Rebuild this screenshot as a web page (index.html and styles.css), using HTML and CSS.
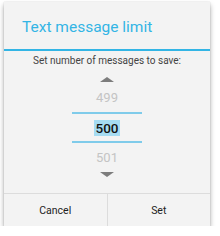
FILE: index.html
```html
<!DOCTYPE html>
<html lang="en">
<head>
  <meta charset="UTF-8" />
  <title>Text message limit</title>
  <link rel="stylesheet" href="styles.css">
</head>
<body>
  <div class="dialog">
    <div class="dialog-title">Text message limit</div>
    <div class="dialog-message">Set number of messages to save:</div>

    <!-- number picker -->
    <div class="picker">
      <span class="arrow arrow-up"></span>
      <div class="picker-value faded">499</div>
      <div class="picker-current"><span class="selected">500</span></div>
      <div class="picker-value faded">501</div>
      <span class="arrow arrow-down"></span>
    </div>

    <div class="buttons">
      <button class="btn">Cancel</button>
      <button class="btn">Set</button>
    </div>
  </div>
</body>
</html>
```

FILE: styles.css
```css
:root {
  --holo-blue: #33b5e5;
  --dialog-bg: #f3f3f3;
  --divider: #dcdcdc;
}

body {
  margin: 0;
  background: #fff;
  font-family: Roboto, "Liberation Sans", sans-serif;
}

.dialog {
  width: 206px;
  height: 224px;
  margin: 2px 0 0 4px;
  background: var(--dialog-bg);
  box-shadow: 0 3px 5px rgba(0, 0, 0, 0.35), 0 0 1px rgba(0, 0, 0, 0.2);
  display: flex;
  flex-direction: column;
}

.dialog-title {
  height: 49px;
  padding-top: 4px;
  line-height: 43px;
  padding-left: 18px;
  font-size: 15.5px;
  color: var(--holo-blue);
  border-bottom: 2px solid var(--holo-blue);
  box-sizing: border-box;
}

.dialog-message {
  margin-top: 3px;
  text-align: center;
  font-size: 10px;
  color: #444;
  line-height: 14px;
}

.picker {
  flex: 1;
  display: flex;
  flex-direction: column;
  align-items: center;
  padding-top: 9px;
}

.arrow {
  width: 0;
  height: 0;
  border-left: 7px solid transparent;
  border-right: 7px solid transparent;
}

.arrow-up {
  border-bottom: 5px solid #7c7c7c;
}

.arrow-down {
  border-top: 5px solid #7c7c7c;
  margin-top: 6px;
}

.picker-value {
  font-size: 13px;
  line-height: 16px;
}

.faded {
  color: #c4c4c4;
}

.arrow-up + .picker-value {
  margin-top: 8px;
}

.picker-current {
  width: 70px;
  height: 27px;
  margin: 6px 0 7px;
  border-top: 2px solid #7fcbea;
  border-bottom: 2px solid #7fcbea;
  display: flex;
  align-items: center;
  justify-content: center;
  font-size: 13.5px;
  font-weight: 500;
  color: #111;
}

.selected {
  background: #a6dcf2;
  padding: 0 1px;
  line-height: 16px;
}

.buttons {
  display: flex;
  border-top: 1px solid var(--divider);
  height: 32px;
}

.btn {
  flex: 1;
  background: none;
  border: none;
  font-family: inherit;
  font-size: 10.5px;
  color: #222;
  padding: 0;
}

.btn + .btn {
  border-left: 1px solid var(--divider);
}
```
